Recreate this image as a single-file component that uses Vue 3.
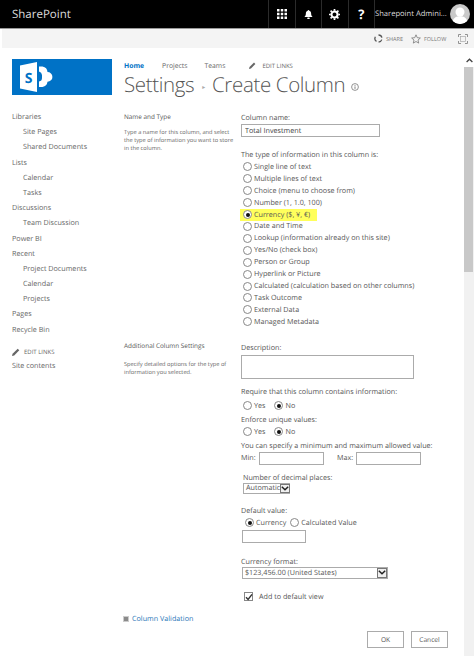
<script setup>
const nav = [
  ['Libraries', 0], ['Site Pages', 1], ['Shared Documents', 1], ['Lists', 0], ['Calendar', 1], ['Tasks', 1],
  ['Discussions', 0], ['Team Discussion', 1], ['Power BI', 0], ['Recent', 0], ['Project Documents', 1],
  ['Calendar', 1], ['Projects', 1], ['Pages', 0], ['Recycle Bin', 0]
]
const types = [
  'Single line of text', 'Multiple lines of text', 'Choice (menu to choose from)', 'Number (1, 1.0, 100)',
  'Currency ($, ¥, €)', 'Date and Time', 'Lookup (information already on this site)', 'Yes/No (check box)',
  'Person or Group', 'Hyperlink or Picture', 'Calculated (calculation based on other columns)', 'Task Outcome',
  'External Data', 'Managed Metadata'
]
</script>

<template>
  <div class="page">
    <header class="suite">
      <div class="brand">SharePoint</div>
      <div class="tile"><svg width="10" height="10" viewBox="0 0 12 12" fill="#fff"><rect x="0" y="0" width="3" height="3"/><rect x="4.500" y="0" width="3" height="3"/><rect x="9" y="0" width="3" height="3"/><rect x="0" y="4.500" width="3" height="3"/><rect x="4.500" y="4.500" width="3" height="3"/><rect x="9" y="4.500" width="3" height="3"/><rect x="0" y="9" width="3" height="3"/><rect x="4.500" y="9" width="3" height="3"/><rect x="9" y="9" width="3" height="3"/></svg></div>
      <div class="tile"><svg width="9" height="11" viewBox="0 0 11 12" fill="#fff"><path d="M5.500 0.500c.6 0 1 .4 1 1 1.600.4 2.200 1.700 2.200 3.300 0 2 .6 3 1.800 4.200H.5c1.200-1.200 1.800-2.200 1.800-4.200 0-1.600.6-2.900 2.200-3.300 0-.6.4-1 1-1z"/><rect x="4" y="9.800" width="3" height="1.800" rx=".8"/></svg></div>
      <div class="tile"><svg width="11" height="11" viewBox="0 0 13 13"><circle cx="6.500" cy="6.500" r="3.600" fill="none" stroke="#fff" stroke-width="2.400"/><path d="M6.500 0v13M0 6.500h13M1.900 1.900l9.200 9.200M11.100 1.900l-9.200 9.200" stroke="#fff" stroke-width="2" stroke-dasharray="2 9 2"/></svg></div>
      <div class="tile help">?</div>
      <div class="user">Sharepoint Admini...</div>
      <div class="avatar"><svg width="20" height="20" viewBox="0 0 20 20"><circle cx="10" cy="10" r="10" fill="#c9c9c9"/><circle cx="10" cy="8" r="4.500" fill="#fff"/><path d="M2.800 17c1-3.400 3.800-4.700 7.200-4.700s6.200 1.300 7.200 4.700A10 10 0 0 1 10 20a10 10 0 0 1-7.200-3z" fill="#fff"/></svg></div>
    </header>

    <div class="ribbon">
      <svg class="r-icon" width="9" height="9" viewBox="0 0 9 9"><path d="M4.500 1a3.500 3.500 0 0 1 3.400 2.700M7.800 5.600A3.500 3.500 0 0 1 4.600 8M2.500 7.400A3.500 3.500 0 0 1 1.400 2.800" fill="none" stroke="#555" stroke-width="1.300"/></svg>
      <span class="r-text">SHARE</span>
      <svg class="r-icon star" width="10" height="10" viewBox="0 0 10 10"><path d="M5 .8l1.250 2.900 3.100.3-2.350 2.050.7 3.050L5 7.500 2.300 9.100l.7-3.050L.65 4l3.100-.3z" fill="none" stroke="#777" stroke-width=".8"/></svg>
      <span class="r-text">FOLLOW</span>
      <svg class="r-icon focus" width="10" height="10" viewBox="0 0 10 10"><path d="M.5 3V.5H3M7 .5h2.500V3M9.500 7v2.500H7M3 9.500H.5V7" fill="none" stroke="#888" stroke-width=".9"/><rect x="2.500" y="2.500" width="5" height="5" fill="none" stroke="#aaa" stroke-width=".7"/></svg>
    </div>

    <div class="body">
      <aside class="side">
        <div class="logo">
          <svg width="34" height="30" viewBox="0 0 34 30">
            <path d="M0 3.500 17 0v30L0 26.500z" fill="#fff"/>
            <path d="M19 4.500h3.500a6 6 0 0 1 5 5.500 4.500 4.500 0 0 1 0 9.800 6 6 0 0 1-5 5.200H19v-5.500a3.500 3.500 0 0 0 3-3.500V13a4 4 0 0 0-3-3.500z" fill="#fff"/>
            <text x="8.500" y="20.500" text-anchor="middle" font-family="Open Sans" font-size="14" font-weight="700" fill="#0072c6">S</text>
          </svg>
        </div>
        <nav class="nav">
          <div v-for="(n, i) in nav" :key="i" class="nav-item" :class="{ sub: n[1] }">{{ n[0] }}</div>
        </nav>
        <div class="side-edit">
          <svg width="8" height="8" viewBox="0 0 8 8"><path d="M0 8l.6-2.200L5.700.7l1.600 1.600-5.100 5.100z" fill="#666"/></svg>
          <span>EDIT LINKS</span>
        </div>
        <div class="nav-item site">Site contents</div>
      </aside>

      <main class="content">
        <div class="tabs">
          <span class="tab active">Home</span>
          <span class="tab">Projects</span>
          <span class="tab">Teams</span>
          <span class="tab edit">
            <svg width="7" height="7" viewBox="0 0 8 8"><path d="M0 8l.6-2.200L5.700.7l1.600 1.600-5.100 5.100z" fill="#666"/></svg>
            EDIT LINKS
          </span>
        </div>
        <h1 class="title">
          <span>Settings</span><span class="crumb">▸</span><span>Create Column</span>
          <svg class="info" width="8" height="8" viewBox="0 0 8 8"><circle cx="4" cy="4" r="3.400" fill="none" stroke="#777" stroke-width=".8"/><path d="M4 3.400v2.500M4 2v.8" stroke="#777" stroke-width=".9"/></svg>
        </h1>

        <section class="sec first">
          <div class="sec-left">
            <div class="sec-title">Name and Type</div>
            <p class="sec-desc">Type a name for this column, and select the type of information you want to store in the column.</p>
          </div>
          <div class="sec-right">
            <label class="lbl">Column name:</label>
            <input class="box name" value="Total Investment" readonly />
            <div class="lbl type-lbl">The type of information in this column is:</div>
            <div class="types">
              <div v-for="(t, i) in types" :key="t" class="radio-row" :class="{ hl: i === 4 }">
                <span class="radio" :class="{ on: i === 4 }"></span>{{ t }}
              </div>
            </div>
          </div>
        </section>

        <section class="sec second">
          <div class="sec-left">
            <div class="sec-title">Additional Column Settings</div>
            <p class="sec-desc">Specify detailed options for the type of information you selected.</p>
          </div>
          <div class="sec-right">
            <label class="lbl">Description:</label>
            <div class="box desc"></div>
            <div class="lbl req">Require that this column contains information:</div>
            <div class="yn"><span class="radio"></span>Yes<span class="radio on gap"></span>No</div>
            <div class="lbl enf">Enforce unique values:</div>
            <div class="yn"><span class="radio"></span>Yes<span class="radio on gap"></span>No</div>
            <div class="lbl minmax">You can specify a minimum and maximum allowed value:</div>
            <div class="range">
              <span class="min">Min:</span><div class="box num"></div>
              <span class="max">Max:</span><div class="box num"></div>
            </div>
            <div class="lbl dec">Number of decimal places:</div>
            <div class="select auto">
              <span>Automatic</span>
              <span class="arrow"><svg width="8" height="5" viewBox="0 0 8 5"><path d="M.8.8 4 3.800 7.200.8" fill="none" stroke="#222" stroke-width="1.500"/></svg></span>
            </div>
            <div class="lbl def">Default value:</div>
            <div class="yn def-row"><span class="radio on"></span>Currency<span class="radio near"></span>Calculated Value</div>
            <div class="box defval"></div>
            <div class="lbl fmt">Currency format:</div>
            <div class="select cur">
              <span>$123,456.00 (United States)</span>
              <span class="arrow"><svg width="8" height="5" viewBox="0 0 8 5"><path d="M.8.8 4 3.800 7.200.8" fill="none" stroke="#222" stroke-width="1.500"/></svg></span>
            </div>
            <div class="check-row">
              <span class="check"><svg width="8" height="8" viewBox="0 0 8 8"><path d="M1 4.200 3.100 6.500 7 1.300" fill="none" stroke="#333" stroke-width="1.400"/></svg></span>
              Add to default view
            </div>
          </div>
        </section>

        <div class="validation">
          <span class="plus"></span><span>Column Validation</span>
        </div>
        <div class="actions">
          <button class="btn">OK</button>
          <button class="btn">Cancel</button>
        </div>
      </main>

      <div class="scroll">
        <svg class="up" width="7" height="5" viewBox="0 0 7 5"><path d="M.6 4 3.500 1.200 6.400 4" fill="none" stroke="#444" stroke-width="1.300"/></svg>
        <div class="thumb"></div>
      </div>
    </div>
  </div>
</template>

<style>
html, body { margin: 0; background: #fff; }
</style>

<style scoped>
.page {
  width: 474px; height: 656px; overflow: hidden; display: flex; flex-direction: column;
  font-family: "Open Sans", "Liberation Sans", sans-serif; color: #444; background: #fff;
  text-rendering: geometricPrecision;
}
.suite { height: 28px; background: #000; border-bottom: 1px solid #999; display: flex; align-items: center; flex: none; }
.brand { color: #ddd; font-size: 11.500px; margin-left: 12px; width: 256px; }
.tile { width: 26.500px; height: 28px; border-left: 1px solid #2b2b2b; box-sizing: border-box; display: flex; align-items: center; justify-content: center; }
.help { color: #fff; font-weight: 700; font-size: 13px; }
.user { color: #ddd; font-size: 7.600px; white-space: nowrap; width: 76px; padding-left: 0; border-left: 1px solid #2b2b2b; line-height: 28px; box-sizing: border-box; }
.avatar { margin-left: 0; height: 20px; }

.ribbon { height: 19px; margin-left: 2px; background: #f4f4f4; display: flex; align-items: center; flex: none; color: #777; }
.r-icon { flex: none; margin-left: 372px; }
.r-text { font-size: 5.500px; margin-left: 3px; color: #777; }
.star { margin-left: 8px; }
.focus { margin-left: 12px; margin-right: 0; }

.body { flex: 1; display: flex; min-height: 0; }
.side { width: 124px; flex: none; padding-left: 12px; box-sizing: border-box; }
.logo { width: 100px; height: 36px; margin-top: 11px; background: #0072c6; display: flex; align-items: center; padding-left: 8px; box-sizing: border-box; }
.logo svg { height: 30px; width: 34px; }
.nav { margin-top: 15px; }
.nav-item { height: 15.200px; line-height: 15.200px; font-size: 7.200px; color: #666; white-space: nowrap; }
.nav-item.sub { padding-left: 11px; }
.side-edit { margin-top: 8px; height: 13px; display: flex; align-items: center; gap: 4px; font-size: 6px; color: #666; }
.site { height: 14px; line-height: 14px; }

.content { flex: 1; min-width: 0; position: relative; }
.tabs { margin-top: 12px; height: 11px; display: flex; align-items: center; font-size: 6.800px; color: #666; }
.tab { margin-right: 17px; }
.tab.active { color: #0072c6; font-weight: 700; margin-right: 18px; }
.tab.edit { font-size: 6px; margin-left: 7px; display: flex; gap: 6px; align-items: center; }
.title { margin: 0; height: 28px; line-height: 26px; font-weight: 300; font-size: 20.500px; color: #555; display: flex; align-items: center; white-space: nowrap; letter-spacing: -.35px; }
.crumb { font-size: 6px; color: #aaa; margin: 4px 7px 0 8px; }
.info { margin-left: 6px; margin-top: 4px; }

.sec { display: flex; }
.first { margin-top: 13px; }
.second { margin-top: 13.300px; }
.sec-left { width: 117px; flex: none; }
.sec-title { font-size: 6.400px; color: #555; line-height: 10px; white-space: nowrap; }
.sec-desc { margin: 6px 0 0; font-size: 5.700px; line-height: 8.200px; color: #666; width: 112px; }
.second .sec-desc { margin-top: 9px; }
.sec-right { flex: 1; min-width: 0; padding-top: 1px; }
.second .sec-right { padding-top: 2px; }
.lbl { display: block; font-size: 7.200px; color: #555; line-height: 11px; white-space: nowrap; }
.box { border: 1px solid #ababab; box-sizing: border-box; background: #fff; display: block; }
.name { width: 139px; height: 13px; margin-top: 0; padding: 0 3px; font: inherit; font-size: 7.200px; color: #444; outline: none; text-rendering: geometricPrecision; }
.type-lbl { margin-top: 13px; }
.types { margin-left: 2px; }
.radio-row { height: 11.920px; display: flex; align-items: center; font-size: 7.200px; color: #555; white-space: nowrap; width: 74px; }
.radio-row.hl { background: #ffff5c; margin-left: -3px; padding-left: 3px; width: 74px; }
.radio { width: 7px; height: 7px; border: 1px solid #888; border-radius: 50%; box-sizing: content-box; flex: none; margin-right: 2px; background: #fff; position: relative; display: inline-block; }
.radio.on::after { content: ""; position: absolute; left: 1.500px; top: 1.500px; width: 4px; height: 4px; border-radius: 50%; background: #111; }
.desc { width: 173px; height: 24px; margin-top: 1px; }
.req { margin-top: 8px; margin-bottom: 2px; }
.yn { display: flex; align-items: center; height: 12px; font-size: 7.200px; color: #555; margin-left: 2px; }
.gap { margin-left: 9px; }
.enf { margin-top: 3px; }
.minmax { margin-top: 3px; }
.range { display: flex; align-items: center; font-size: 7.200px; color: #555; height: 13px; }
.min { width: 18px; }
.num { width: 65px; height: 13px; }
.max { margin-left: 13px; width: 19px; }
.dec { margin-top: 8px; margin-left: 2px; }
.select { display: flex; align-items: center; justify-content: space-between; border: 1px solid #ababab; box-sizing: border-box; font-size: 7.200px; color: #555; background: #fff; white-space: nowrap; padding-left: 2px; }
.arrow { border: 1px solid #777; background: #f0f0f0; width: 10px; height: 100%; box-sizing: border-box; display: flex; align-items: center; justify-content: center; flex: none; }
.auto { width: 47px; height: 11px; margin: -1px 0 0 2px; }
.def { margin-top: 12px; }
.def-row { margin-left: 4px; }
.near { margin-left: 4px; }
.defval { width: 64px; height: 13px; margin-left: 1px; margin-top: 1px; }
.fmt { margin-top: 14px; }
.cur { width: 146px; height: 12px; margin: -1px 0 0 1px; }
.check-row { display: flex; align-items: center; font-size: 7.200px; color: #555; margin-top: 12px; margin-left: 3px; height: 12px; }
.check { width: 7px; height: 7px; border: 1px solid #888; display: flex; align-items: center; justify-content: center; margin-right: 6px; }
.check svg { flex: none; }
.validation { position: absolute; left: -1px; top: 566px; display: flex; align-items: center; gap: 3px; font-size: 7.200px; color: #2a76b8; }
.plus { width: 4px; height: 4px; background: #8a8a8a; border: 1px solid #ccc; }
.actions { position: absolute; left: 243px; top: 583px; display: flex; gap: 7px; }
.btn { width: 37px; height: 17px; border: 1px solid #ababab; background: #fff; font: inherit; font-size: 6.600px; color: #555; padding: 0; text-rendering: geometricPrecision; }

.scroll { width: 10px; flex: none; background: #f1f1f1; position: relative; display: flex; flex-direction: column; align-items: center; }
.up { position: absolute; top: 10px; left: 1.500px; }
.scroll::before { content: ""; height: 19px; width: 100%; background: #fff; flex: none; }
.thumb { height: 205px; width: 9px; margin-right: 1px; background: #c8c8c8; }
</style>
